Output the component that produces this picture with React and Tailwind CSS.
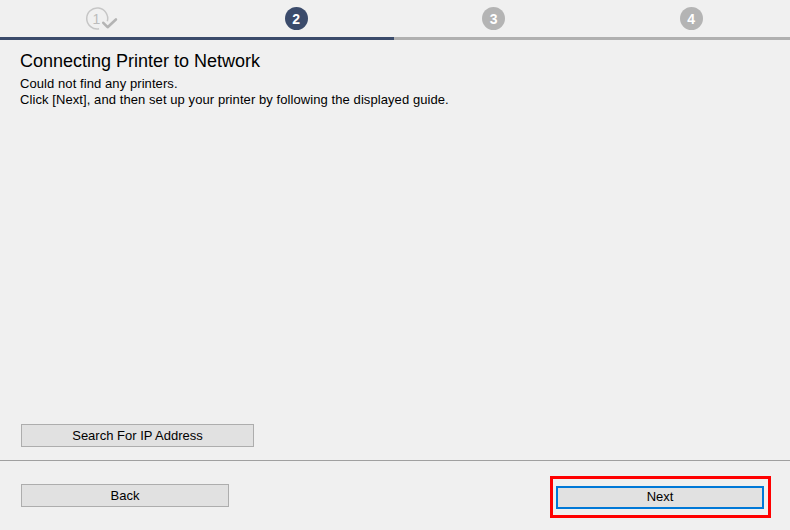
import React from 'react';

// Wizard steps shown in the top progress header
const STEPS = [1, 2, 3, 4];

function DoneStep() {
  // step 1: outlined circle with a check mark over its lower right edge
  return (
    <svg width="44" height="26" viewBox="0 0 44 26" className="block">
      <path
        d="M 22.05 22.8 A 10.5 10.5 0 1 1 30.35 15.2"
        fill="none"
        stroke="#c6c6c6"
        strokeWidth="1.5"
      />
      <text
        x="19.5"
        y="17.8"
        textAnchor="middle"
        fontSize="14"
        fill="#bcbcbc"
        fontFamily="Liberation Sans, Arial, sans-serif"
      >
        1
      </text>
      <path
        d="M 26.3 16.8 L 30.6 21.2 L 38.9 13.5"
        fill="none"
        stroke="#b4b4b4"
        strokeWidth="2.6"
        strokeLinecap="round"
        strokeLinejoin="round"
      />
    </svg>
  );
}

function StepDot({ n, active }) {
  return (
    <div
      className={`w-[23px] h-[23px] rounded-full flex items-center justify-center text-[14px] font-bold text-white leading-none ${
        active ? 'bg-[#3b4b6b]' : 'bg-[#b4b4b4]'
      }`}
    >
      {n}
    </div>
  );
}

function Button({ children, className = '', focused }) {
  return (
    <button
      className={`h-[23px] bg-[#e1e1e1] text-[13px] leading-none text-black ${
        focused ? 'border-2 border-[#0078d7] pb-px' : 'border border-[#adadad]'
      } ${className}`}
    >
      {children}
    </button>
  );
}

export default function App() {
  return (
    <div className="w-[790px] h-[530px] bg-[#f0f0f0] flex flex-col text-black font-['Liberation_Sans',Arial,sans-serif] overflow-hidden">
      {/* Step header */}
      <div className="grid grid-cols-4 h-[37px]">
        {STEPS.map(n => (
          <div key={n} className="flex items-center justify-center">
            {n === 1 ? <DoneStep /> : <StepDot n={n} active={n === 2} />}
          </div>
        ))}
      </div>
      <div className="flex h-[3px]">
        <div className="w-[394px] bg-[#3b4b6b]" />
        <div className="flex-1 bg-[#b0b0b0]" />
      </div>

      {/* Body */}
      <div className="flex-1 flex flex-col px-[20px] pt-[10px]">
        <h1 className="text-[18px] leading-[22px] font-normal">Connecting Printer to Network</h1>
        <div className="mt-[4px] text-[13px] leading-[16px] tracking-[0.08px]">
          <p>Could not find any printers.</p>
          <p>Click [Next], and then set up your printer by following the displayed guide.</p>
        </div>
        <div className="flex-1" />
        <Button className="ml-[1px] w-[233px] mb-[13px]">Search For IP Address</Button>
      </div>

      <div className="h-px bg-[#a0a0a0]" />

      {/* Footer */}
      <div className="h-[69px] flex items-start justify-between pt-[23px] pl-[21px] pr-[26px]">
        <Button className="w-[208px]">Back</Button>
        <div className="relative">
          <Button focused className="w-[208px]">Next</Button>
          <div className="absolute -top-[8px] -left-[6px] -right-[7px] -bottom-[9px] border-[3px] border-[#ff0000] pointer-events-none" />
        </div>
      </div>
    </div>
  );
}
